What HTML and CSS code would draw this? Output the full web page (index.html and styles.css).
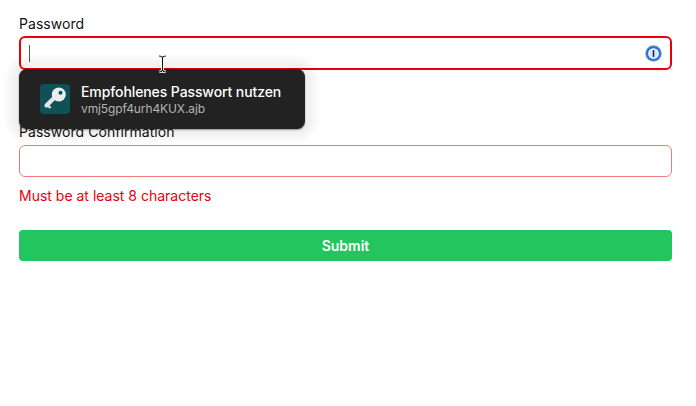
FILE: index.html
```html
<!DOCTYPE html>
<html lang="en">
<head>
<meta charset="UTF-8">
<title>Password</title>
<link rel="stylesheet" href="styles.css">
</head>
<body>
<form class="form">
  <div class="field first">
    <label class="label" for="password">Password</label>
    <div class="input focused">
      <span class="caret"></span>
      <svg class="vault" width="17" height="17" viewBox="0 0 16 16">
        <circle cx="8" cy="8" r="7.800" fill="#8f9aa6"/>
        <circle cx="8" cy="8" r="6.900" fill="#1a74ea"/>
        <circle cx="8" cy="8" r="5" fill="#fff"/>
        <circle cx="8" cy="8" r="3.900" fill="#d5e4f8"/>
        <rect x="7.300" y="4.800" width="1.400" height="6.400" fill="#10233f"/>
      </svg>
    </div>
  </div>
  <div class="field second">
    <label class="label" for="confirm">Password Confirmation</label>
    <div class="input invalid"></div>
    <p class="error">Must be at least 8 characters</p>
  </div>
  <button class="submit" type="button">Submit</button>
</form>

<div class="popup">
  <div class="popup-icon">
    <svg width="30" height="30" viewBox="0 0 30 30">
      <path d="M15 13L6.500 21.500" fill="none" stroke="#e6e6e6" stroke-width="4.200" stroke-linecap="round"/>
      <path d="M8.500 22l2 2" stroke="#e6e6e6" stroke-width="2.400"/>
      <circle cx="18.800" cy="10.500" r="7" fill="#ececec"/>
      <circle cx="20.500" cy="8.800" r="2" fill="#0c5257"/>
    </svg>
  </div>
  <div class="popup-text">
    <div class="popup-title">Empfohlenes Passwort nutzen</div>
    <div class="popup-sub">vmj5gpf4urh4KUX.ajb</div>
  </div>
</div>

<svg class="ibeam" width="9" height="18" viewBox="0 0 9 18">
  <path d="M1 1c2 0 3 .6 3.500 1.500C5 1.600 6 1 8 1M4.500 2.500v12.500M1 17c2 0 3-.6 3.500-2 .5 1.400 1.500 2 3.500 2" fill="none" stroke="#fff" stroke-width="3"/>
  <path d="M1 1c2 0 3 .6 3.500 1.500C5 1.600 6 1 8 1M4.500 2.500v12.500M1 17c2 0 3-.6 3.500-2 .5 1.400 1.500 2 3.500 2" fill="none" stroke="#111" stroke-width="1.100"/>
</svg>
</body>
</html>
```

FILE: styles.css
```css
body {
  margin: 0;
  background: #fff;
  font-family: Inter, "Liberation Sans", sans-serif;
  color: #111;
}
.form {
  padding: 15px 24px 0 19px;
}
.label {
  display: block;
  font-size: 14px;
  line-height: 18px;
  letter-spacing: 0.05px;
}
.input {
  display: flex;
  align-items: center;
  justify-content: space-between;
  box-sizing: border-box;
  margin-top: 3px;
  border-radius: 6px;
  background: #fff;
}
.focused {
  height: 34px;
  padding: 0 8px;
  border: 2px solid #e6000a;
}
.invalid {
  height: 32px;
  margin-top: 4px;
  border: 1px solid #f5787c;
}
.caret {
  width: 1px;
  height: 17px;
  background: #555;
}
.second {
  margin-top: 53px;
}
.error {
  margin: 10px 0 0;
  font-size: 14px;
  line-height: 18px;
  color: #e6000a;
}
.submit {
  display: block;
  width: 100%;
  height: 31px;
  margin-top: 25px;
  border: 0;
  border-radius: 4px;
  background: #22c55e;
  color: #fff;
  font-family: inherit;
  font-size: 14px;
  font-weight: 600;
}
.popup {
  position: absolute;
  left: 19px;
  top: 69px;
  display: flex;
  align-items: center;
  gap: 11px;
  box-sizing: border-box;
  width: 286px;
  height: 60px;
  padding-left: 21px;
  border-radius: 8px;
  background: #222;
  box-shadow: 0 1px 2px rgba(0, 0, 0, 0.4), 0 0 8px 10px rgba(0, 0, 0, 0.06);
}
.popup-icon {
  width: 30px;
  height: 30px;
  border-radius: 4px;
  background: #0c5257;
}
.popup-title {
  font-size: 14px;
  line-height: 18px;
  font-weight: 500;
  letter-spacing: -0.1px;
  color: #fff;
}
.popup-sub {
  margin-top: 1px;
  font-size: 12px;
  line-height: 14px;
  letter-spacing: -0.1px;
  color: #b4b4b4;
}
.ibeam {
  position: absolute;
  left: 158px;
  top: 55px;
}
```
